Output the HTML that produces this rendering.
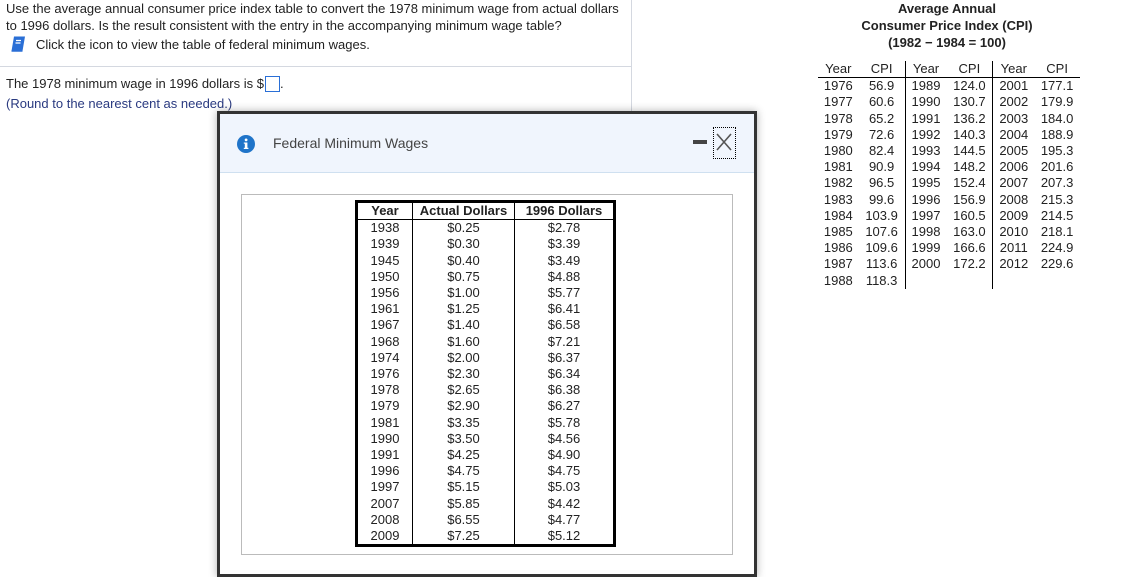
<!DOCTYPE html>
<html><head><meta charset="utf-8"><style>
body{margin:0;width:1124px;height:564px;overflow:hidden;background:#fff;font-family:"Liberation Sans",sans-serif;font-size:13px;color:#222;position:relative}
.a{position:absolute}
table{border-collapse:collapse}
td{padding:0;height:16.2px;line-height:16.2px;text-align:center}
</style></head><body>
<div class="a" style="left:6px;top:0;line-height:17px;width:640px">Use the average annual consumer price index table to convert the 1978 minimum wage from actual dollars<br>to 1996 dollars. Is the result consistent with the entry in the accompanying minimum wage table?</div>
<svg class="a" style="left:9px;top:35px" width="18" height="18" viewBox="0 0 18 18"><path d="M5 1.5h11l-2.5 14.5H2.5z" fill="#2a6fd6"/><path d="M2.5 16h11" stroke="#2a6fd6" stroke-width="1.5"/><path d="M7 5.5h5M6.5 8h5" stroke="#fff" stroke-width="1.3"/></svg>
<div class="a" style="left:36px;top:37px">Click the icon to view the table of federal minimum wages.</div>
<div class="a" style="left:0;top:66px;width:631px;height:1px;background:#d4d8e0"></div>
<div class="a" style="left:631px;top:0;width:1px;height:112px;background:#d4d8e0"></div>
<div class="a" style="left:6px;top:76px">The 1978 minimum wage in 1996 dollars is $<span style="display:inline-block;width:13px;height:14px;border:1px solid #2a6fd6;vertical-align:-4px;margin-left:1px"></span>.</div>
<div class="a" style="left:6px;top:96px;color:#2a3a80">(Round to the nearest cent as needed.)</div>

<div class="a" style="left:837px;top:0;width:220px;text-align:center;font-weight:bold;line-height:17px">Average Annual<br>Consumer Price Index (CPI)<br>(1982 − 1984 = 100)</div>
<div class="a" style="left:818px;top:61px">
<table style="width:262px">
<tr style="border-bottom:1px solid #000"><td>Year</td><td style="border-right:1px solid #000">CPI</td><td>Year</td><td style="border-right:1px solid #000">CPI</td><td>Year</td><td>CPI</td></tr>
<tr><td>1976</td><td style="border-right:1px solid #000">56.9</td><td>1989</td><td style="border-right:1px solid #000">124.0</td><td>2001</td><td>177.1</td></tr>
<tr><td>1977</td><td style="border-right:1px solid #000">60.6</td><td>1990</td><td style="border-right:1px solid #000">130.7</td><td>2002</td><td>179.9</td></tr>
<tr><td>1978</td><td style="border-right:1px solid #000">65.2</td><td>1991</td><td style="border-right:1px solid #000">136.2</td><td>2003</td><td>184.0</td></tr>
<tr><td>1979</td><td style="border-right:1px solid #000">72.6</td><td>1992</td><td style="border-right:1px solid #000">140.3</td><td>2004</td><td>188.9</td></tr>
<tr><td>1980</td><td style="border-right:1px solid #000">82.4</td><td>1993</td><td style="border-right:1px solid #000">144.5</td><td>2005</td><td>195.3</td></tr>
<tr><td>1981</td><td style="border-right:1px solid #000">90.9</td><td>1994</td><td style="border-right:1px solid #000">148.2</td><td>2006</td><td>201.6</td></tr>
<tr><td>1982</td><td style="border-right:1px solid #000">96.5</td><td>1995</td><td style="border-right:1px solid #000">152.4</td><td>2007</td><td>207.3</td></tr>
<tr><td>1983</td><td style="border-right:1px solid #000">99.6</td><td>1996</td><td style="border-right:1px solid #000">156.9</td><td>2008</td><td>215.3</td></tr>
<tr><td>1984</td><td style="border-right:1px solid #000">103.9</td><td>1997</td><td style="border-right:1px solid #000">160.5</td><td>2009</td><td>214.5</td></tr>
<tr><td>1985</td><td style="border-right:1px solid #000">107.6</td><td>1998</td><td style="border-right:1px solid #000">163.0</td><td>2010</td><td>218.1</td></tr>
<tr><td>1986</td><td style="border-right:1px solid #000">109.6</td><td>1999</td><td style="border-right:1px solid #000">166.6</td><td>2011</td><td>224.9</td></tr>
<tr><td>1987</td><td style="border-right:1px solid #000">113.6</td><td>2000</td><td style="border-right:1px solid #000">172.2</td><td>2012</td><td>229.6</td></tr>
<tr><td>1988</td><td style="border-right:1px solid #000">118.3</td><td></td><td style="border-right:1px solid #000"></td><td></td><td></td></tr>
</table></div>

<div class="a" style="left:217px;top:111px;width:534px;height:460px;border:3px solid #333;background:#fff;box-shadow:0 0 8px rgba(0,0,0,.3)">
 <div class="a" style="left:0;top:0;width:534px;height:58px;background:#f0f5fd;border-bottom:1px solid #cfe0f0"></div>
 <svg class="a" style="left:17px;top:21px" width="18" height="18" viewBox="0 0 18 18"><circle cx="9" cy="9" r="9" fill="#1f74c9"/><rect x="7.8" y="7.5" width="2.6" height="6.5" fill="#fff"/><rect x="6.8" y="7.5" width="3" height="1.2" fill="#fff"/><rect x="6.8" y="12.8" width="4.6" height="1.2" fill="#fff"/><circle cx="9.1" cy="4.9" r="1.4" fill="#fff"/></svg>
 <div class="a" style="left:53px;top:21px;font-size:14px;color:#444">Federal Minimum Wages</div>
 <div class="a" style="left:473px;top:26px;width:14px;height:4px;background:#444"></div>
 <div class="a" style="left:493px;top:13px;width:21px;height:30px;border:1px dotted #000"></div>
 <svg class="a" style="left:494px;top:18px" width="20" height="20" viewBox="0 0 20 20"><path d="M3 2L17 18M17 2L3 18" stroke="#555" stroke-width="1.6"/></svg>
 <div class="a" style="left:21px;top:80px;width:490px;height:359px;border:1px solid #bbb"></div>
 <table class="a" style="left:135px;top:86px;border:3px solid #000;width:261px">
 <tr style="border-bottom:1px solid #000;font-weight:bold"><td style="width:54px;border-right:1px solid #000">Year</td><td style="width:101px;border-right:1px solid #000">Actual Dollars</td><td>1996 Dollars</td></tr>
 <tr><td style="border-right:1px solid #000">1938</td><td style="border-right:1px solid #000">$0.25</td><td>$2.78</td></tr>
 <tr><td style="border-right:1px solid #000">1939</td><td style="border-right:1px solid #000">$0.30</td><td>$3.39</td></tr>
 <tr><td style="border-right:1px solid #000">1945</td><td style="border-right:1px solid #000">$0.40</td><td>$3.49</td></tr>
 <tr><td style="border-right:1px solid #000">1950</td><td style="border-right:1px solid #000">$0.75</td><td>$4.88</td></tr>
 <tr><td style="border-right:1px solid #000">1956</td><td style="border-right:1px solid #000">$1.00</td><td>$5.77</td></tr>
 <tr><td style="border-right:1px solid #000">1961</td><td style="border-right:1px solid #000">$1.25</td><td>$6.41</td></tr>
 <tr><td style="border-right:1px solid #000">1967</td><td style="border-right:1px solid #000">$1.40</td><td>$6.58</td></tr>
 <tr><td style="border-right:1px solid #000">1968</td><td style="border-right:1px solid #000">$1.60</td><td>$7.21</td></tr>
 <tr><td style="border-right:1px solid #000">1974</td><td style="border-right:1px solid #000">$2.00</td><td>$6.37</td></tr>
 <tr><td style="border-right:1px solid #000">1976</td><td style="border-right:1px solid #000">$2.30</td><td>$6.34</td></tr>
 <tr><td style="border-right:1px solid #000">1978</td><td style="border-right:1px solid #000">$2.65</td><td>$6.38</td></tr>
 <tr><td style="border-right:1px solid #000">1979</td><td style="border-right:1px solid #000">$2.90</td><td>$6.27</td></tr>
 <tr><td style="border-right:1px solid #000">1981</td><td style="border-right:1px solid #000">$3.35</td><td>$5.78</td></tr>
 <tr><td style="border-right:1px solid #000">1990</td><td style="border-right:1px solid #000">$3.50</td><td>$4.56</td></tr>
 <tr><td style="border-right:1px solid #000">1991</td><td style="border-right:1px solid #000">$4.25</td><td>$4.90</td></tr>
 <tr><td style="border-right:1px solid #000">1996</td><td style="border-right:1px solid #000">$4.75</td><td>$4.75</td></tr>
 <tr><td style="border-right:1px solid #000">1997</td><td style="border-right:1px solid #000">$5.15</td><td>$5.03</td></tr>
 <tr><td style="border-right:1px solid #000">2007</td><td style="border-right:1px solid #000">$5.85</td><td>$4.42</td></tr>
 <tr><td style="border-right:1px solid #000">2008</td><td style="border-right:1px solid #000">$6.55</td><td>$4.77</td></tr>
 <tr><td style="border-right:1px solid #000">2009</td><td style="border-right:1px solid #000">$7.25</td><td>$5.12</td></tr>
 </table>
</div>
</body></html>
